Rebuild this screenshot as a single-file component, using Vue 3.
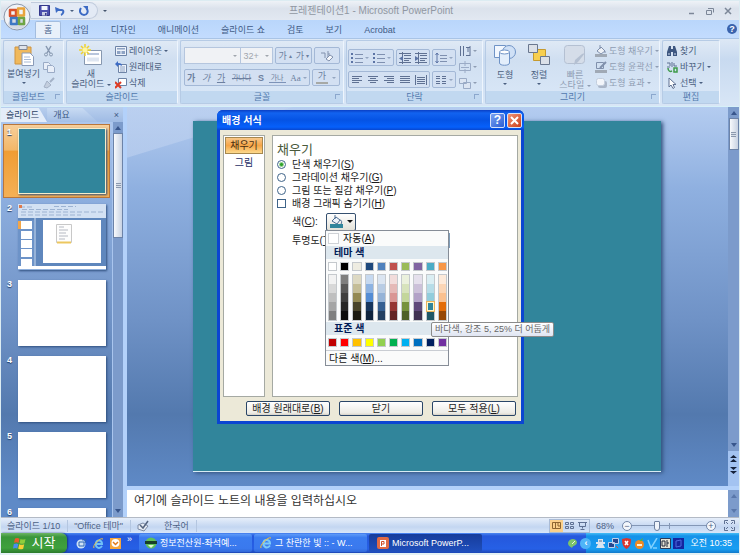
<template>
  <div class="screen">
    <header class="titlebar">
      <button class="office" aria-label="Office">
        <svg viewBox="0 0 28 28" width="28" height="28">
          <circle cx="14" cy="14" r="13" fill="#f1f3f6" stroke="#8b97aa"/>
          <ellipse cx="14" cy="21" rx="9" ry="5" fill="#d5dae3"/>
          <g fill="none" stroke-width="2.5" stroke-linejoin="round">
            <path d="M7 7h6v6H7z" stroke="#d9512c"/>
            <path d="M15 5.500h6v7h-6z" stroke="#e9a43b"/>
            <path d="M8 15h6v6H8z" stroke="#3d78c4"/>
            <path d="M16 15h5v6h-5z" stroke="#6fa544"/>
          </g>
        </svg>
      </button>
      <div class="quick">
        <button aria-label="저장">
          <svg viewBox="0 0 11 11" width="11" height="11">
            <path d="M.5.5h10v10H.5z" fill="#4b4fae" stroke="#34378a"/>
            <path d="M2.500 1h6v4h-6z" fill="#f3f6fd"/>
            <path d="M3 7h5v3.500H3z" fill="#c9cfe6"/>
            <path d="M6 8h1.500v2.500H6z" fill="#34378a"/>
          </svg>
        </button>
        <button aria-label="실행 취소">
          <svg viewBox="0 0 10 10" width="10" height="10">
            <path d="M2 4h4.500c3 0 2 4-.5 5" fill="none" stroke="#3d6bc4" stroke-width="2"/>
            <path d="M0 1l1 6 4-4z" fill="#3d6bc4"/>
          </svg>
        </button>
        <i class="arrow"></i>
        <button aria-label="다시 실행">
          <svg viewBox="0 0 10 10" width="10" height="10">
            <path d="M2 2c-2.500 3.500 0 7 3 7s5-3.500 2.500-6.500" fill="none" stroke="#3d6bc4" stroke-width="2"/>
            <path d="M4 0h5v5z" fill="#3d6bc4"/>
          </svg>
        </button>
      </div>
      <i class="arrow more"></i>
      <h1>프레젠테이션1 - Microsoft PowerPoint</h1>
      <div class="winbtns">
        <button aria-label="최소화">
          <svg viewBox="0 0 8 8" width="8" height="8"><path d="M1 6.500h5" stroke="#7c8798" stroke-width="1.500"/></svg>
        </button>
        <button aria-label="이전 크기로">
          <svg viewBox="0 0 8 8" width="8" height="8"><path d="M2 1.500h5.500v4M.5 3.500h5v4h-5z" fill="none" stroke="#7c8798"/></svg>
        </button>
        <button aria-label="닫기">
          <svg viewBox="0 0 8 8" width="8" height="8"><path d="M1 1l6 6M7 1L1 7" stroke="#7c8798" stroke-width="1.500"/></svg>
        </button>
      </div>
    </header>

    <nav class="tabs">
      <button v-for="tab in tabs" :key="tab" :class="{active: tab === activeTab}" @click="activeTab = tab">{{tab}}</button>
      <button class="help" aria-label="도움말">?</button>
    </nav>

    <section class="ribbon">
      <div class="group clipboard">
        <div class="group-body">
          <button class="big">
            <svg viewBox="0 0 22 22" width="22" height="22">
              <path d="M2 3h16v17H2z" fill="#f0b95c" stroke="#cf9440"/>
              <path d="M6 1.500h8v4H6z" fill="#dfe3ea" stroke="#7e8798"/>
              <path d="M9 9h8l3.500 3.500V21.500H9z" fill="#fff" stroke="#8a9bb8"/>
              <path d="M11 13h6M11 15.500h7M11 18h7" stroke="#a9bbd6"/>
            </svg>
            <span>붙여넣기</span>
            <i class="arrow"></i>
          </button>
          <div class="stack faded">
            <button class="row" aria-label="잘라내기">
              <svg viewBox="0 0 12 12" width="12" height="12">
                <path d="M3 1l4 7M8 1L4 8" stroke="#8798b0" stroke-width="1.500"/>
                <circle cx="3" cy="9.500" r="1.500" fill="none" stroke="#8798b0"/>
                <circle cx="8" cy="9.500" r="1.500" fill="none" stroke="#8798b0"/>
              </svg>
            </button>
            <button class="row" aria-label="복사">
              <svg viewBox="0 0 12 12" width="12" height="12">
                <path d="M.5 1.500h5l2 2v5h-7z" fill="#e8eef8" stroke="#9aabc6"/>
                <path d="M4.500 4.500h5l2 2v5h-7z" fill="#e8eef8" stroke="#9aabc6"/>
              </svg>
            </button>
            <button class="row" aria-label="서식 복사">
              <svg viewBox="0 0 12 12" width="12" height="12">
                <path d="M11 1L7 5" stroke="#a3b1c6" stroke-width="2"/>
                <path d="M4 4l4 4-4 3-3-1z" fill="#c3cede" stroke="#a3b1c6"/>
              </svg>
            </button>
          </div>
        </div>
        <div class="group-label">클립보드<i class="launcher"></i></div>
      </div>

      <div class="group slides">
        <div class="group-body">
          <button class="big">
            <svg viewBox="0 0 24 22" width="24" height="22">
              <path d="M5.500 6.500h17v14h-17z" fill="#fff" stroke="#8798b0"/>
              <path d="M8 9h12v2H8z" fill="#b9c6dc"/>
              <path d="M8 13.500h12v4H8z" fill="#dfe6f1"/>
              <path d="M6 0v12M0 6h12M2 2l8 8M10 2l-8 8" stroke="#efd22f" stroke-width="1.500"/>
              <circle cx="6" cy="6" r="2.500" fill="#fff6a0"/>
            </svg>
            <span>새</span>
            <span>슬라이드 <i class="arrow"></i></span>
          </button>
          <div class="stack">
            <button class="row">
              <svg viewBox="0 0 12 12" width="12" height="12">
                <path d="M.5 1.500h11v9H.5z" fill="#eef3fb" stroke="#6d83a6"/>
                <path d="M2 3h8v1.500H2zM2 6h3.500v3H2zM6.500 6H10v3H6.500z" fill="#8ea3c4"/>
              </svg>
              레이아웃 <i class="arrow"></i>
            </button>
            <button class="row">
              <svg viewBox="0 0 12 12" width="12" height="12">
                <path d="M3.500 3.500h8v8h-8z" fill="#eef3fb" stroke="#6d83a6"/>
                <path d="M5 6h5M5 8h5M5 10h5" stroke="#8ea3c4"/>
                <path d="M0 3l3-3v2c3 0 4 1 4 3-1-1-2-1-4-1v2z" fill="#3d6bc4"/>
              </svg>
              원래대로
            </button>
            <button class="row">
              <svg viewBox="0 0 12 12" width="12" height="12">
                <path d="M3.500 1.500h8v7h-8z" fill="#fff" stroke="#6d83a6"/>
                <path d="M0 5l6 6M6 5l-6 6" stroke="#dd3b24" stroke-width="2"/>
              </svg>
              삭제
            </button>
          </div>
        </div>
        <div class="group-label">슬라이드</div>
      </div>

      <div class="group font">
        <div class="group-body lines">
          <div class="line">
            <div class="combos">
              <label class="combo wide"><select aria-label="글꼴"><option></option></select></label>
              <label class="combo"><select aria-label="글꼴 크기"><option>32+</option></select></label>
            </div>
            <div class="set">
              <button class="serif">가<sup>▴</sup></button>
              <button class="serif">가<sup>▾</sup></button>
            </div>
            <div class="set">
              <button aria-label="서식 지우기">
                <svg viewBox="0 0 14 12" width="14" height="12">
                  <path d="M1 3h4v5M8 1v8M8 4h2" fill="none" stroke="#8090ac"/>
                  <path d="M6 9l4-4 3 2-4 4z" fill="#f6f8fc" stroke="#8090ac"/>
                </svg>
              </button>
            </div>
          </div>
          <div class="line">
            <div class="set styles">
              <button class="serif"><b>가</b></button>
              <button><em>가</em></button>
              <button><u>가</u></button>
              <button class="tiny"><s>가나다</s></button>
              <button><b>S</b></button>
              <button class="tiny spaced">가나</button>
              <button class="serif">Aa<i class="arrow"></i></button>
            </div>
            <div class="set"><button class="color">가</button><i class="arrow"></i></div>
          </div>
        </div>
        <div class="group-label">글꼴<i class="launcher"></i></div>
      </div>

      <div class="group paragraph">
        <div class="group-body">
          <div class="lines">
            <div class="line">
              <div class="set">
                <button v-for="name in ['글머리 기호', '번호 매기기']" :key="name" :aria-label="name">
                  <svg viewBox="0 0 12 12" width="12" height="12">
                    <path d="M0 2h2M0 6h2M0 10h2" stroke="#5c74a5" stroke-width="2"/>
                    <path d="M4 2.500h8M4 6.500h8M4 10.500h8" stroke="#7f90b0"/>
                  </svg>
                  <i class="arrow"></i>
                </button>
              </div>
              <div class="set">
                <button aria-label="목록 수준 줄임"><svg viewBox="0 0 12 12" width="12" height="12"><path :d="indentLines" stroke="#5f7193"/><path d="M4 4L0 6.500 4 9z" fill="#5c74a5"/></svg></button>
                <button aria-label="목록 수준 늘림"><svg viewBox="0 0 12 12" width="12" height="12"><path :d="indentLines" stroke="#5f7193"/><path d="M0 4l4 2.500L0 9z" fill="#5c74a5"/></svg></button>
              </div>
              <div class="set">
                <button aria-label="줄 간격">
                  <svg viewBox="0 0 12 12" width="12" height="12">
                    <path d="M2 1v10M.5 3L2 1l1.500 2M.5 9L2 11l1.500-2" fill="none" stroke="#5c74a5"/>
                    <path d="M5 3.500h7M5 6.500h7M5 9.500h7" stroke="#7f90b0"/>
                  </svg>
                  <i class="arrow"></i>
                </button>
              </div>
            </div>
            <div class="line">
              <div class="set">
                <button v-for="a in aligns" :key="a.name" :aria-label="a.name">
                  <svg viewBox="0 0 12 10" width="12" height="10"><path :d="a.d" stroke="#5f7193"/></svg>
                </button>
              </div>
              <div class="set">
                <button aria-label="단">
                  <svg viewBox="0 0 12 10" width="12" height="10"><path d="M1 1.500h4M1 3.500h4M1 6.500h4M1 8.500h4M7 1.500h4M7 3.500h4M7 6.500h4M7 8.500h4" stroke="#5f7193"/></svg>
                  <i class="arrow"></i>
                </button>
              </div>
            </div>
          </div>
          <div class="stack faded">
            <button class="row" aria-label="텍스트 방향">
              <svg viewBox="0 0 12 12" width="12" height="12"><path d="M1.500 1v10M4.500 1v10M7 2.500h4M9 3v4M7 10.500h4M11 1v10" fill="none" stroke="#5f7193"/></svg><i class="arrow"></i>
            </button>
            <button class="row" aria-label="텍스트 맞춤">
              <svg viewBox="0 0 12 12" width="12" height="12"><path d="M.5 2.500h11v7H.5zM2 6.500h8M6 0v5M6 8v4" fill="none" stroke="#9aabc6"/></svg><i class="arrow"></i>
            </button>
            <button class="row" aria-label="SmartArt로 변환">
              <svg viewBox="0 0 12 12" width="12" height="12"><path d="M.5 1.500h7v5h-7zM4.500 5.500h7v6h-7z" fill="#dce5f2" stroke="#9aabc6"/></svg><i class="arrow"></i>
            </button>
          </div>
        </div>
        <div class="group-label">단락<i class="launcher"></i></div>
      </div>

      <div class="group drawing">
        <div class="group-body">
          <button class="big">
            <svg viewBox="0 0 22 22" width="22" height="22">
              <path d="M.5 1.500h11v12H.5z" fill="#f2f7fe" stroke="#6f93c6"/>
              <circle cx="15" cy="8" r="6.500" fill="#cfe0f6" stroke="#6f93c6"/>
              <path d="M5.500 8v11c0 3 10 3 10 0V8z" fill="#e3eefb" stroke="#6f93c6"/>
              <ellipse cx="10.500" cy="8" rx="5" ry="2" fill="#fff" stroke="#6f93c6"/>
            </svg>
            <span>도형</span>
            <i class="arrow"></i>
          </button>
          <button class="big">
            <svg viewBox="0 0 22 22" width="22" height="22">
              <path d="M5.500 5.500h12v11h-12z" fill="#f7cf50" stroke="#c69a2e"/>
              <path d="M.5.5h9v8h-9z" fill="#dbe0e8" stroke="#69778f"/>
              <path d="M12.500 12.500h9v8h-9z" fill="#dbe0e8" stroke="#69778f"/>
            </svg>
            <span>정렬</span>
            <i class="arrow"></i>
          </button>
          <button class="big faded quickstyle">
            <svg viewBox="0 0 22 22" width="22" height="22">
              <rect x=".5" y="1.500" width="20" height="18" rx="3" fill="#d5dde9" stroke="#b4c0d2"/>
              <path d="M21 9l-7 9-4 3 1-5 7-6z" fill="#b4c0d2"/>
            </svg>
            <span>빠른</span>
            <span>스타일 <i class="arrow"></i></span>
          </button>
          <div class="stack faded">
            <button class="row">
              <svg viewBox="0 0 12 12" width="12" height="12">
                <path d="M2 6l4-4 4 4-4 3z" fill="#eef1f6" stroke="#8090ac"/>
                <path d="M5 4V0M10 6v2" stroke="#8090ac"/>
                <path d="M0 9h12v3H0z" fill="#a0a9b5"/>
              </svg>
              도형 채우기 <i class="arrow"></i>
            </button>
            <button class="row">
              <svg viewBox="0 0 12 12" width="12" height="12">
                <path d="M1.500 1.500h7v6h-7z" fill="none" stroke="#8090ac"/>
                <path d="M11 1L5 7" stroke="#8090ac" stroke-width="2"/>
                <path d="M0 9h12v3H0z" fill="#a0a9b5"/>
              </svg>
              도형 윤곽선 <i class="arrow"></i>
            </button>
            <button class="row">
              <svg viewBox="0 0 12 12" width="12" height="12">
                <rect x="3" y="4" width="9" height="7" rx="2" fill="#aab6c8"/>
                <rect x="1.500" y="1.500" width="8" height="7" rx="2" fill="#f2f5fa" stroke="#c3cede"/>
              </svg>
              도형 효과 <i class="arrow"></i>
            </button>
          </div>
        </div>
        <div class="group-label">그리기<i class="launcher"></i></div>
      </div>

      <div class="group editing">
        <div class="group-body">
          <div class="stack">
            <button class="row">
              <svg viewBox="0 0 12 12" width="12" height="12">
                <path d="M3 1h2v3h2V1h2l2 6v4H7V7H5v4H1V7z" fill="#3d5680"/>
                <path d="M2.500 8h1v2h-1zM8.500 8h1v2h-1z" fill="#c9d6ea"/>
              </svg>
              찾기
            </button>
            <button class="row">
              <svg viewBox="0 0 12 12" width="12" height="12">
                <path d="M1 2h3v3M1 6h3M6 1v5M8 2v3h3" fill="none" stroke="#5f7193"/>
                <path d="M2 7c0 3 2 4 4 3M8 11V7h3v4z" fill="none" stroke="#3f9a4a" stroke-width="1.500"/>
              </svg>
              바꾸기 <i class="arrow"></i>
            </button>
            <button class="row">
              <svg viewBox="0 0 12 12" width="12" height="12"><path d="M3 1v9l2-2 2 3.500 1.500-1L7 7.500h3z" fill="#fff" stroke="#5f7193"/></svg>
              선택 <i class="arrow"></i>
            </button>
          </div>
        </div>
        <div class="group-label">편집</div>
      </div>
    </section>

    <main class="work">
      <aside class="panel">
        <div class="panel-tabs">
          <button class="on">슬라이드</button>
          <button>개요</button>
          <button class="panel-close" aria-label="창 닫기">×</button>
        </div>
        <div class="panel-body">
          <ol class="thumbs">
            <li v-for="n in 6" :key="n" :class="{current: n === 1}">
              <span>{{n}}</span>
              <div class="thumb">
                <svg v-if="n === 2" viewBox="0 0 88 66" preserveAspectRatio="none">
                  <path d="M0 0h88v66H0z" fill="#5f87bd"/>
                  <path d="M0 0h88v14H0z" fill="#d3e1f3"/>
                  <path d="M2 3h12M36 2.500h22M4 5.500h46M3 8h82M3 11h60" stroke="#9db3d2" stroke-dasharray="5 2"/>
                  <path d="M1 1h3v3H1z" fill="#df7a4c"/>
                  <path d="M0 16h16v46H0z" fill="#6d93c8"/>
                  <path d="M0 17h3v8H0z" fill="#f2a649"/>
                  <path d="M3 17h11v8H3zM3 27h11v8H3zM3 36h11v8H3zM3 45h11v8H3zM3 55h11v7H3z" fill="#fff"/>
                  <path d="M17 14v48" stroke="#cfdef3"/>
                  <path d="M25 16h58v43H25z" fill="#fff"/>
                  <path d="M38.500 20.500h15v18h-15z" fill="#fdfdfd" stroke="#c8c8c8"/>
                  <path d="M41 23h5M41 26h9M41 29h7M41 32h9M41 35h6" stroke="#b5b9c2"/>
                  <path d="M39 38.500h14" stroke="#ecc75f" stroke-width="2"/>
                  <path d="M0 62h88v3H0z" fill="#fff"/>
                  <path d="M0 65h88v1H0z" fill="#8fb0dd"/>
                </svg>
              </div>
            </li>
          </ol>
          <div class="scroll">
            <i class="up"></i>
            <i class="grip long"></i>
            <i class="down"></i>
          </div>
        </div>
      </aside>

      <section class="editor">
        <div class="stage">
          <div class="canvas"><div class="slide"></div></div>
          <div class="stage-side">
            <div class="scroll">
              <i class="up"></i>
              <i class="grip"></i>
              <i class="down"></i>
            </div>
            <svg viewBox="0 0 11 35" width="11" height="35">
              <path d="M2 7l3.500-3L9 7zM2 11l3.500-3L9 11zM2 16h7l-3.500 3zM2 20h7l-3.500 3z" fill="#16233c"/>
            </svg>
          </div>
        </div>
        <div class="notes">
          <textarea aria-label="슬라이드 노트" placeholder="여기에 슬라이드 노트의 내용을 입력하십시오"></textarea>
          <div class="scroll"><i class="up"></i><i class="down"></i></div>
        </div>
      </section>
    </main>

    <footer class="status">
      <span>슬라이드 1/10</span>
      <span>"Office 테마"</span>
      <span class="check">
        <svg viewBox="0 0 14 12" width="14" height="12">
          <path d="M2 5l5-2 5 3-4 5-6-2z" fill="#e8edf5" stroke="#7c8ba5"/>
          <path d="M4 5l3 3 5-7" fill="none" stroke="#54647f" stroke-width="1.500"/>
        </svg>
      </span>
      <span>한국어</span>
      <div class="views">
        <button class="on" aria-label="기본"><svg viewBox="0 0 9 9" width="9" height="9"><path d="M.5 1.500h8v6h-8zM3.500 1.500v6M6 1.500V5h2" fill="none" stroke="#8d6530"/></svg></button>
        <button aria-label="여러 슬라이드"><svg viewBox="0 0 9 9" width="9" height="9"><path d="M.5 1.500h3v2h-3zM5.500 1.500h3v2h-3zM.5 5.500h3v2h-3zM5.500 5.500h3v2h-3z" fill="none" stroke="#5f7193"/></svg></button>
        <button aria-label="슬라이드 쇼"><svg viewBox="0 0 9 9" width="9" height="9"><path d="M0 1.500h9M1.500 1.500v4h6v-4M4.500 5.500v2M2.500 8.500h4" fill="none" stroke="#5f7193"/></svg></button>
      </div>
      <label for="zoom">{{zoomText}}</label>
      <button class="round" aria-label="축소">−</button>
      <input id="zoom" v-model="zoom" type="range" min="0" max="100">
      <button class="round" aria-label="확대">+</button>
      <button class="fit" aria-label="창에 맞춤">
        <svg viewBox="0 0 11 11" width="11" height="11"><path d="M.5 4V.5H4M7 .5h3.500V4M10.500 7v3.500H7M4 10.500H.5V7M2 2l2 2M9 2L7 4M9 9L7 7M2 9l2-2" fill="none" stroke="#5f7193"/></svg>
      </button>
    </footer>

    <div class="taskbar">
      <button class="start">
        <svg viewBox="0 0 14 13" width="14" height="13">
          <path d="M2 1.500c2-1 3-.5 4.500.2L5.500 6C4 5 3 5 1 5.800z" fill="#ec5b2c"/>
          <path d="M7.500 2c2 .8 3 .8 5 0l-1 4.200c-2 .8-3 .6-5 0z" fill="#8fce3c"/>
          <path d="M.8 7c2-.8 3-.8 4.500 0l-1 4.500c-1.500-.8-2.500-.8-4.300 0z" fill="#4b8cf0"/>
          <path d="M6.200 7.200c2 .8 3 .8 5 0l-1 4.500c-2 .8-3 .6-5 0z" fill="#f9cf35"/>
        </svg>
        시작
      </button>
      <div class="launch">
        <svg viewBox="0 0 11 11" width="11" height="11"><circle cx="5" cy="6" r="4.500" fill="#cfe2f6"/><path d="M3 4h5v4H3zM6 2l4-1-1 4" fill="none" stroke="#2f67b5"/></svg>
        <svg viewBox="0 0 11 11" width="11" height="11"><path d="M9 8c-3 4-7 1-6-3s6-3 6 1H3" fill="none" stroke="#6fc1f7" stroke-width="2"/><path d="M1 10C-1 8 7-1 10 1" fill="none" stroke="#f4c23a"/></svg>
        <svg viewBox="0 0 11 11" width="11" height="11"><path d="M0 0h11v11H0z" fill="#f6a63c"/><circle cx="5.500" cy="5" r="4" fill="#fff"/><path d="M3 4l2.500 2.500L8 4" fill="none" stroke="#e07b1e" stroke-width="1.500"/></svg>
        <b>»</b>
      </div>
      <button class="task">
        <svg viewBox="0 0 12 12" width="12" height="12"><circle cx="6" cy="6" r="5.500" fill="#5fc05a"/><path d="M0 4h12v3H0z" fill="#173f2a"/><path d="M3 8h6l-3 3z" fill="#e0f6d6"/></svg>
        정보전산원-좌석예...
      </button>
      <button class="task">
        <svg viewBox="0 0 12 12" width="12" height="12"><path d="M10 8.500c-3 4-7.500 1-6.500-3s6.500-3 6.500 1h-6" fill="none" stroke="#7ccbf8" stroke-width="2"/><path d="M1 11C-1 9 8-1 11 1" fill="none" stroke="#f4c23a"/></svg>
        그 찬란한 빛 :: - W...
      </button>
      <button class="task pressed">
        <svg viewBox="0 0 12 12" width="12" height="12"><rect width="12" height="12" rx="2" fill="#e06a45"/><path d="M3 3h6v7H3z" fill="#fff"/><path d="M4.500 9V4.500H7V7H5" fill="none" stroke="#cf4d27"/></svg>
        Microsoft PowerP...
      </button>
      <svg class="leaf" viewBox="0 0 11 11" width="11" height="11"><path d="M1 5c1-5 8-5 9-1 0 4-4 3-5 6-1-1-4-2-4-5z" fill="#7cc36a"/><path d="M5 6l3-3" stroke="#e9f7e2"/></svg>
      <div class="tray">
        <button class="expand" aria-label="숨겨진 아이콘 표시">‹</button>
        <svg viewBox="0 0 11 11" width="11" height="11"><path d="M3 1h5v3h2v2H8l2 4H1l2-4H1V4h2z" fill="#d8e5f2"/><path d="M4 3h3" stroke="#56708f"/></svg>
        <svg viewBox="0 0 11 11" width="11" height="11"><path d="M4.500.5h6v5h-6zM.5 4.500h6v5h-6z" fill="#27468f" stroke="#bcd0ec"/><path d="M8 8l2 2" stroke="#e04a35"/></svg>
        <svg viewBox="0 0 11 11" width="11" height="11"><path d="M1 1l4.500-1L10 1c0 5-1 8-4.500 10C2 9 1 6 1 1z" fill="#d93630"/><path d="M4 3l3 4M7 3L4 7" stroke="#fff" stroke-width="1.500"/></svg>
        <svg viewBox="0 0 11 11" width="11" height="11"><circle cx="5.500" cy="6.500" r="4.500" fill="#f08a24"/><path d="M5 3l4-3-1 3z" fill="#5fae3b"/><path d="M3 6h5v2H3z" fill="#fff2d8"/></svg>
        <svg viewBox="0 0 11 11" width="11" height="11"><path d="M1 2l3 8L10 0M6 10h4" fill="none" stroke="#7fd0ff" stroke-width="1.500"/></svg>
        <svg viewBox="0 0 11 11" width="11" height="11"><path d="M.5.5h10v10H.5z" fill="#e5e2d5" stroke="#2b3a57"/><path d="M2 3h3v5H2zM7 2v7M7 5h2" fill="none" stroke="#20293b"/></svg>
        <svg viewBox="0 0 11 11" width="11" height="11"><path d="M0 0h11v11H0z" fill="#1426a0"/><path d="M3 3l5-1v6l-5 1z" fill="none" stroke="#4d6ae0"/></svg>
        <time>오전 10:35</time>
      </div>
    </div>

    <div class="dialog" role="dialog" aria-labelledby="dialog-title">
      <div class="dialog-title">
        <h2 id="dialog-title">배경 서식</h2>
        <button aria-label="도움말">?</button>
        <button class="x" aria-label="닫기">
          <svg viewBox="0 0 9 9" width="9" height="9"><path d="M1 1l7 7M8 1L1 8" stroke="#fff" stroke-width="2"/></svg>
        </button>
      </div>
      <div class="dialog-body">
        <div class="dialog-cols">
          <div class="side">
            <button class="on">채우기</button>
            <button>그림</button>
          </div>
          <div class="pane">
            <h3>채우기</h3>
            <label v-for="f in fills" :key="f.key"><input v-model="fill" type="radio" name="fill" :value="f.key"><span>{{f.text}}(<u>{{f.key}}</u>)</span></label>
            <label><input type="checkbox"><span>배경 그래픽 숨기기(<u>H</u>)</span></label>
            <div class="field color-field">
              <span>색(<u>C</u>):</span>
              <button class="picker" aria-label="색">
                <svg viewBox="0 0 13 13" width="13" height="13">
                  <path d="M2 6l4-4 4 3-3 4z" fill="#eef4fa" stroke="#4d6d92"/>
                  <path d="M5 4V0M10 5c2 0 2 3 1 4" fill="none" stroke="#4d6d92"/>
                  <path d="M0 9h13v4H0z" fill="#31859b"/>
                </svg>
                <i class="arrow"></i>
              </button>
              <div class="menu">
                <button class="auto"><i></i><span>자동(<u>A</u>)</span></button>
                <h4>테마 색</h4>
                <div class="swatches">
                  <i v-for="c in theme" :key="c[0]" :style="{background: c[0]}"></i>
                </div>
                <div class="swatches shades">
                  <div v-for="(c, col) in theme" :key="c[0]">
                    <i v-for="(shade, row) in c.slice(1)" :key="shade" :class="{picked: col === 8 && row === 3}" :style="{background: shade}"></i>
                  </div>
                </div>
                <h4>표준 색</h4>
                <div class="swatches">
                  <i v-for="c in standard" :key="c" :style="{background: c}"></i>
                </div>
                <button class="other"><span>다른 색(<u>M</u>)...</span></button>
                <div class="tip" role="tooltip">바다색, 강조 5, 25% 더 어둡게</div>
              </div>
            </div>
            <div class="field">
              <label for="alpha">투명도(<u>T</u>):</label>
              <input id="alpha" type="text">
            </div>
          </div>
        </div>
        <div class="dialog-foot">
          <button><span>배경 원래대로(<u>B</u>)</span></button>
          <button>닫기</button>
          <button><span>모두 적용(<u>L</u>)</span></button>
        </div>
      </div>
    </div>
  </div>
</template>

<script setup>
import {ref} from "vue";

const tabs = ['홈', '삽입', '디자인', '애니메이션', '슬라이드 쇼', '검토', '보기', 'Acrobat']
const activeTab = ref('홈')
const zoom = ref(32)
const zoomText = '68%'
const fill = ref('S')
const fills = [
  {key: 'S', text: '단색 채우기'},
  {key: 'G', text: '그라데이션 채우기'},
  {key: 'P', text: '그림 또는 질감 채우기'}
]
const indentLines = 'M0 1.500h12M5 3.500h7M5 6.500h7M5 8.500h5M0 10.500h12M3.500 0v12'
const aligns = [
  {name: '왼쪽 맞춤', d: 'M1 1.500h10M1 3.500h7M1 5.500h10M1 7.500h7'},
  {name: '가운데 맞춤', d: 'M1 1.500h10M3 3.500h6M1 5.500h10M3 7.500h6'},
  {name: '오른쪽 맞춤', d: 'M1 1.500h10M4 3.500h7M1 5.500h10M4 7.500h7'},
  {name: '양쪽 맞춤', d: 'M1 1.500h10M1 3.500h10M1 5.500h10M1 7.500h10'},
  {name: '균등 분할', d: 'M.5 0v10M11.500 0v10M2 2.500h8M2 4.500h8M2 6.500h8M2 8.500h8'}
]
// first colour is the base, the rest go from light to dark
const theme = [
  ['#ffffff', '#f2f2f2', '#d8d8d8', '#bfbfbf', '#a5a5a5', '#7f7f7f'],
  ['#000000', '#7f7f7f', '#595959', '#3f3f3f', '#262626', '#0c0c0c'],
  ['#eeece1', '#ddd9c3', '#c4bd97', '#938953', '#494429', '#1d1b10'],
  ['#1f497d', '#c6d9f0', '#8db3e2', '#548dd4', '#17365d', '#0f243e'],
  ['#4f81bd', '#dbe5f1', '#b8cce4', '#95b3d7', '#366092', '#244061'],
  ['#c0504d', '#f2dcdb', '#e5b9b7', '#d99694', '#953734', '#632423'],
  ['#9bbb59', '#ebf1dd', '#d7e3bc', '#c3d69b', '#76923c', '#4f6128'],
  ['#8064a2', '#e5e0ec', '#ccc1d9', '#b2a2c7', '#5f497a', '#3f3151'],
  ['#4bacc6', '#dbeef3', '#b7dde8', '#92cddc', '#31859b', '#205867'],
  ['#f79646', '#fdeada', '#fbd5b5', '#fac08f', '#e36c09', '#974806']
]
const standard = ['#c00000', '#ff0000', '#ffc000', '#ffff00', '#92d050', '#00b050', '#00b0f0', '#0070c0', '#002060', '#7030a0']
</script>

<style>
body {
  margin: 0;
}
</style>

<style scoped>
* {
  box-sizing: border-box;
}
.screen {
  position: relative;
  display: flex;
  flex-direction: column;
  height: 100vh;
  overflow: hidden;
  border: 1px solid #dcecf2;
  border-bottom: 2px solid #e4f1f4;
  font: 9px/12px "Liberation Sans", "Noto Sans CJK KR", sans-serif;
  color: #4a5f80;
  white-space: nowrap;
}
button, select, input, textarea {
  font: inherit;
  color: inherit;
  margin: 0;
  padding: 0;
  border: 0;
  background: none;
}
button {
  display: flex;
  align-items: center;
  justify-content: center;
}
h1, h2, h3, h4, ol {
  margin: 0;
  padding: 0;
  font-weight: normal;
}
svg {
  display: block;
  flex: none;
}
.arrow {
  display: inline-block;
  flex: none;
  border: 2px solid transparent;
  border-top-color: currentColor;
  border-bottom: 0;
  vertical-align: middle;
}

.titlebar {
  flex: none;
  display: flex;
  align-items: center;
  height: 19px;
  background: linear-gradient(#eef2f7, #dbe2ec 40%, #e2e8f1);
}
.office {
  position: absolute;
  left: 2px;
  top: 2px;
  z-index: 2;
}
.quick {
  display: flex;
  align-items: center;
  gap: 5px;
  height: 17px;
  margin-left: 30px;
  padding: 0 8px;
  border: 1px solid #c0cbdc;
  border-left: 0;
  border-radius: 0 9px 9px 0;
  background: #e3eaf5;
}
.more {
  margin-left: 5px;
  color: #44546d;
}
h1 {
  flex: 1;
  padding-right: 104px;
  text-align: center;
  font-size: 10px;
  color: #9097a2;
}
.winbtns {
  position: absolute;
  right: 7px;
  display: flex;
  gap: 10px;
}

.tabs {
  flex: none;
  display: flex;
  align-items: flex-end;
  height: 18px;
  padding-left: 34px;
  background: linear-gradient(#b9d6fb, #c3dcfe);
}
.tabs button {
  height: 17px;
  padding: 0 11px;
  color: #3f5a85;
}
.tabs .active {
  padding: 0 8px;
  border: 1px solid #a3bddf;
  border-bottom: 0;
  border-radius: 2px 2px 0 0;
  background: #e8f0fa;
}
.tabs .help {
  align-self: center;
  height: 10px;
  width: 10px;
  margin: 0 2px 0 auto;
  padding: 0;
  border-radius: 50%;
  background: #3a63ad;
  color: #fff;
  font-weight: bold;
}

.ribbon {
  flex: none;
  display: flex;
  gap: 2px;
  height: 69px;
  padding: 1px 2px 2px;
  border-top: 1px solid #a9c4e6;
  border-bottom: 1px solid #d6f0f8;
  background: linear-gradient(#dde8f5, #c8daf0 30%, #d8e6f6);
}
.group {
  flex: none;
  display: flex;
  flex-direction: column;
  border: 1px solid #b6cbe5;
  border-right-color: #eef5fd;
  border-radius: 2px;
  background: linear-gradient(#dfe9f5, #d0dff1 30%, #dae8f8);
}
.clipboard {
  width: 61px;
}
.slides {
  width: 112px;
}
.font {
  width: 164px;
}
.paragraph {
  width: 137px;
}
.drawing {
  width: 175px;
}
.editing {
  width: 58px;
}
.group-body {
  flex: 1;
  display: flex;
  gap: 3px;
  padding: 2px 3px 0;
}
.group-label {
  position: relative;
  height: 12px;
  text-align: center;
  background: #c1d8f0;
  color: #5278ae;
}
.launcher {
  position: absolute;
  right: 3px;
  top: 3px;
  width: 5px;
  height: 5px;
  border: 1px solid #8ba7cd;
  border-right: 0;
  border-bottom: 0;
}
.clipboard .group-label {
  padding-right: 10px;
}
.big {
  flex-direction: column;
  justify-content: flex-start;
  min-width: 32px;
  line-height: 11px;
}
.big svg {
  margin: 1px 0 3px;
}
.drawing .big svg {
  margin-bottom: 4px;
}
.big > .arrow {
  margin-top: 2px;
}
.slides .big {
  min-width: 42px;
}
.quickstyle {
  min-width: 36px;
}
.slides .big, .quickstyle {
  line-height: 10px;
}
.stack {
  display: flex;
  flex-direction: column;
}
.row {
  justify-content: flex-start;
  gap: 2px;
  height: 16px;
}
.faded {
  color: #8f9db3;
}
.lines {
  display: flex;
  flex-direction: column;
  gap: 5px;
  padding-top: 6px;
}
.line {
  display: flex;
  gap: 2px;
  height: 17px;
}
.set {
  display: flex;
  align-items: center;
  border: 1px solid #a3b8d6;
  border-radius: 2px;
  background: #d3e0f2;
  color: #6d80a0;
}
.set button {
  gap: 2px;
  height: 100%;
  padding: 0 2px;
}
.set .arrow {
  opacity: .6;
}
.serif {
  font-family: "Liberation Serif", "Noto Sans CJK KR", serif;
}
sup {
  font-size: 6px;
  line-height: 6px;
}
.styles {
  flex: 1;
  justify-content: space-between;
}
.styles .tiny {
  font-size: 7px;
}
.spaced, .color {
  line-height: 9px;
}
.set .spaced {
  height: 11px;
  border-bottom: 1px solid #7d93b8;
}
.set .color {
  height: 13px;
  border-bottom: 2px solid #a7a9a5;
}
.font .line > .set:last-child {
  gap: 4px;
  padding: 0 3px;
}
.combos {
  flex: 1;
  display: flex;
}
.combo {
  position: relative;
  width: 33px;
  border: 1px solid #b5c6de;
  background: #f0f2f5;
}
.combo.wide {
  flex: 1;
  border-right: 0;
}
.combo::after {
  content: '';
  position: absolute;
  right: 3px;
  top: 7px;
  border: 2px solid transparent;
  border-top-color: #a0a5ad;
  border-bottom: 0;
}
.combo select {
  appearance: none;
  width: 100%;
  height: 15px;
  padding-left: 2px;
  color: #a0a5ad;
}
.paragraph .group-body {
  padding: 2px 1px 0;
}
.paragraph .line .set:first-child {
  flex: 1;
  justify-content: space-around;
}
.drawing .group-body {
  gap: 2px;
}

.work {
  flex: 1;
  display: flex;
  min-height: 0;
  background: linear-gradient(#b4ccf0, #8fb0e0 20%, #6f92c6 52%, #5379ae 75%, #5f8ac7 93%);
}
.panel {
  flex: none;
  display: flex;
  flex-direction: column;
  width: 126px;
  border-right: 4px solid #b3d1fa;
}
.panel-tabs {
  flex: none;
  display: flex;
  height: 15px;
  padding-top: 1px;
  background: linear-gradient(#b9cfee, #9fbbe4);
}
.panel-tabs button {
  padding: 0 13px 0 6px;
  background: linear-gradient(#c9dbf3, #a5c0e6);
  clip-path: polygon(0 0, 70% 0, 100% 100%, 0 100%);
  color: #3f5a85;
}
.panel-tabs .on {
  padding: 0 8px 0 5px;
  background: #e4edf9;
  clip-path: polygon(0 0, 82% 0, 100% 100%, 0 100%);
  color: #2c4264;
}
.panel-tabs button:nth-child(2) {
  padding-right: 28px;
}
.panel-tabs .panel-close {
  margin-left: auto;
  padding: 0 4px;
  background: none;
  clip-path: none;
}
.panel-body {
  flex: 1;
  display: flex;
  min-height: 0;
}
.thumbs {
  flex: 1;
  display: flex;
  flex-direction: column;
  gap: 2px;
  padding: 2px 2px 0;
  overflow: hidden;
  list-style: none;
}
.thumbs li {
  flex: none;
  display: flex;
  padding: 3px 2px 3px 3px;
  border: 1px solid transparent;
  font-size: 9px;
  font-weight: bold;
  line-height: 9px;
  color: #fff;
  text-shadow: 0 1px 1px #24406c;
}
.thumbs li span {
  width: 11px;
}
.thumbs .current {
  border-color: #b9763a;
  background: linear-gradient(#f7cf9a, #f3b768 35%, #f09d33 36%, #f4b055);
}
.thumb {
  width: 88px;
  height: 66px;
  background: #fff;
  box-shadow: 1px 1px 2px #30507f;
}
.thumb svg {
  width: 100%;
  height: 100%;
}
.current .thumb {
  border: 1px solid #f7edca;
  background: #31859b;
}
.scroll {
  flex: none;
  display: flex;
  flex-direction: column;
  align-items: center;
  width: 11px;
  padding: 4px 0;
  background: #7c9bcb;
}
.scroll .up, .scroll .down {
  border: 3px solid transparent;
}
.scroll .up {
  border-top: 0;
  border-bottom: 4px solid #38568c;
}
.scroll .down {
  margin-top: auto;
  border-bottom: 0;
  border-top: 4px solid #38568c;
}
.grip {
  display: flex;
  align-items: center;
  justify-content: center;
  width: 10px;
  height: 32px;
  margin-top: 3px;
  border: 1px solid #6c83a8;
  background: linear-gradient(90deg, #f7f9fc, #c8d2e2);
}
.grip::before {
  content: '';
  width: 5px;
  height: 5px;
  background: repeating-linear-gradient(#8c99ae 0 1px, #d9e0ea 1px 2px);
}
.grip.long {
  height: 105px;
}
.panel .scroll {
  border-left: 1px solid #a9c5ee;
}
.editor {
  flex: 1;
  display: flex;
  flex-direction: column;
  min-width: 0;
}
.stage {
  flex: 1;
  display: flex;
  min-height: 0;
}
.canvas {
  flex: 1;
  display: flex;
  padding: 14px 67px 14px 66px;
  background: linear-gradient(163deg, #bfd2f099 0 48px, transparent 49px);
}
.slide {
  flex: 1;
  border-bottom: 1px solid #d7ecf4;
  background: #31859b;
  box-shadow: 2px 1px 4px #32517d;
}
.stage-side {
  flex: none;
  display: flex;
  flex-direction: column;
  background: #a3c3f1;
}
.stage-side .scroll {
  flex: 1;
}
.notes {
  flex: none;
  display: flex;
  height: 31px;
  border-top: 4px solid #b3d1fa;
}
.notes textarea {
  flex: 1;
  padding: 3px 7px;
  resize: none;
  background: #fff;
  font-size: 12px;
  line-height: 16px;
}
.notes textarea::placeholder {
  color: #333;
}
.notes .up, .notes .down {
  opacity: .5;
}

.status {
  flex: none;
  display: flex;
  align-items: center;
  height: 16px;
  padding: 0 4px 0 0;
  border-top: 1px solid #b3bac5;
  background: linear-gradient(#e6eefa, #c3d6f1 60%, #d8e6f9);
  color: #4d6285;
}
.status > span {
  padding: 0 7px 0 6px;
  border-right: 1px solid #b4c6e0;
}
.status .check {
  padding: 0 8px 0 5px;
  border: 0;
}
.views {
  display: flex;
  margin-left: auto;
  border: 1px solid #a9bbd6;
}
.views button {
  width: 13px;
  height: 12px;
}
.views .on {
  background: #fbd08a;
}
.status label {
  margin: 0 8px 0 6px;
}
.round {
  width: 10px;
  height: 10px;
  border: 1px solid #7286a8;
  border-radius: 50%;
  background: #f4f7fc;
}
#zoom {
  appearance: none;
  width: 74px;
  height: 12px;
  background: linear-gradient(#8497b6, #8497b6) 50% 50% / 74px 1px no-repeat, linear-gradient(#8497b6, #8497b6) 50% 50% / 1px 6px no-repeat;
}
#zoom::-webkit-slider-thumb {
  appearance: none;
  width: 6px;
  height: 10px;
  border: 1px solid #6c7f9f;
  border-radius: 1px 1px 3px 3px;
  background: #f0f4fa;
}
.fit {
  margin-left: 8px;
}

.taskbar {
  flex: none;
  display: flex;
  height: 20px;
  background: linear-gradient(#4d88f2, #2558dc 15%, #2660e6 80%, #1c46b4);
  color: #fff;
}
.start {
  gap: 5px;
  width: 66px;
  border-radius: 0 6px 6px 0;
  background: linear-gradient(#6db566, #3a963a 20%, #3fa13d 75%, #2b7a2c);
  box-shadow: 1px 0 2px #17377f;
  font-size: 13px;
}
.launch {
  display: flex;
  align-items: center;
  gap: 6px;
  padding: 0 7px 0 9px;
}
.launch b {
  margin-top: -8px;
  font-weight: normal;
}
.task {
  flex: 0 1 113px;
  justify-content: flex-start;
  gap: 3px;
  min-width: 0;
  margin: 1px 2px 1px 0;
  padding-left: 6px;
  border-radius: 2px;
  background: linear-gradient(#5d9af8, #3b7cf0 20%, #3a79ee 80%, #2f68d8);
  overflow: hidden;
}
.task.pressed {
  padding-left: 8px;
  background: linear-gradient(#173c9b, #1f4fbd);
}
.leaf {
  align-self: center;
  margin: 0 8px 0 auto;
}
.tray {
  display: flex;
  align-items: center;
  gap: 2px;
  padding-right: 7px;
  background: linear-gradient(#46bdf5, #1592e9 15%, #189ef2 80%, #1279ca);
}
.expand {
  width: 11px;
  height: 11px;
  margin: 0 2px 0 -6px;
  border-radius: 50%;
  background: #4fb4f8;
  font-weight: bold;
}
.tray time {
  margin-left: 4px;
}

.dialog {
  position: absolute;
  left: 216px;
  top: 109px;
  z-index: 3;
  width: 307px;
  border: 3px solid #0b45d2;
  border-top: 0;
  border-radius: 6px 6px 0 0;
  background: #0b45d2;
  font-size: 10px;
  line-height: 13px;
  color: #1c1c1c;
}
.dialog-title {
  display: flex;
  align-items: center;
  gap: 2px;
  height: 20px;
  margin: 0 -3px;
  padding: 0 2px 0 5px;
  border-radius: 6px 6px 0 0;
  background: linear-gradient(#0a3fc4, #1263f0 15%, #0553e4 50%, #0660fb 85%, #0847d0);
}
h2 {
  flex: 1;
  font-size: 10px;
  font-weight: bold;
  color: #fff;
}
.dialog-title button {
  width: 15px;
  height: 15px;
  border: 1px solid #d6e2fa;
  border-radius: 2px;
  background: linear-gradient(135deg, #7aa2f2, #2a5ed4);
  font-size: 12px;
  font-weight: bold;
  color: #fff;
}
.dialog-title .x {
  background: linear-gradient(135deg, #ef9578, #cc3f1a);
}
.dialog-body {
  padding: 5px 3px 5px;
  background: #ece9d8;
}
.dialog-cols {
  display: flex;
  gap: 7px;
}
.side, .pane {
  border: 1px solid #a5a9a3;
  background: #fff;
}
.side {
  width: 42px;
  padding: 1px;
}
.side button {
  width: 100%;
  height: 17px;
  border: 1px solid transparent;
  color: #1f2f66;
}
.side .on {
  border-color: #a6884e;
  background: linear-gradient(#f9c889, #f5a548 50%, #fcd98c);
  color: #4a2f12;
}
.pane {
  flex: 1;
  min-height: 262px;
  padding: 5px 4px;
}
h3 {
  font-size: 13px;
  line-height: 17px;
  color: #4a5a3c;
}
.pane > label {
  display: flex;
  align-items: center;
  gap: 6px;
}
.pane input[type=radio], .pane input[type=checkbox] {
  appearance: none;
  width: 9px;
  height: 9px;
  border: 1px solid #3f6489;
  background: #fff;
}
.pane input[type=radio] {
  border-radius: 50%;
}
.pane input[type=radio]:checked {
  background: radial-gradient(#2fa32b 0 1px, #fff 3px);
}
.field {
  position: relative;
  display: flex;
  align-items: center;
  height: 19px;
  padding-left: 15px;
}
.color-field {
  margin: 2px 0 0;
}
.color-field > span {
  width: 34px;
}
.picker {
  gap: 4px;
  width: 30px;
  height: 18px;
  border: 1px solid #35506f;
  border-radius: 2px;
  background: linear-gradient(#fff, #e3e1d8);
}
.picker .arrow, .picker + .menu {
  color: #111;
}
.picker .arrow {
  border-width: 3px 3px 0;
}
#alpha {
  position: absolute;
  left: 60px;
  width: 113px;
  height: 15px;
  border: 1px solid #7f9db9;
}
.menu {
  position: absolute;
  left: 48px;
  top: 18px;
  z-index: 1;
  width: 124px;
  border: 1px solid #868d97;
  background: #fafbfb;
}
.auto {
  gap: 4px;
  height: 15px;
  padding-left: 2px;
}
.auto i {
  width: 11px;
  height: 11px;
  border: 1px solid #cfd2d6;
  background: #fff;
}
h4 {
  padding-left: 8px;
  background: #dde7ee;
  font-size: 10px;
  font-weight: bold;
  color: #001a55;
}
.swatches {
  display: grid;
  grid-template-columns: repeat(10, 1fr);
  gap: 3px;
  padding: 3px 1px 3px 2px;
}
.swatches > i, .shades > div {
  border: 1px solid #c5c9cd;
}
.swatches > i {
  height: 9px;
}
.shades {
  padding-top: 0;
  padding-bottom: 1px;
}
.shades i {
  display: block;
  height: 9px;
}
.shades .picked {
  outline: 1px solid #e8b45e;
  border: 1px solid #fff7c9;
}
.other {
  justify-content: flex-start;
  width: 100%;
  height: 15px;
  padding-left: 3px;
  border-top: 1px solid #c9cdd3;
}
.tip {
  position: absolute;
  left: 105px;
  top: 91px;
  padding: 0 3px;
  border: 1px solid #8b8b8b;
  border-radius: 2px;
  background: linear-gradient(#fff, #dfe5f2);
  font-size: 9px;
  color: #666;
}
.dialog-foot {
  display: flex;
  justify-content: flex-end;
  gap: 9px;
  margin-top: 4px;
  padding-right: 2px;
}
.dialog-foot button {
  width: 84px;
  height: 15px;
  border: 1px solid #2a4668;
  border-radius: 2px;
  background: linear-gradient(#fff, #ecebe5 85%, #d6d0c5);
}
</style>
